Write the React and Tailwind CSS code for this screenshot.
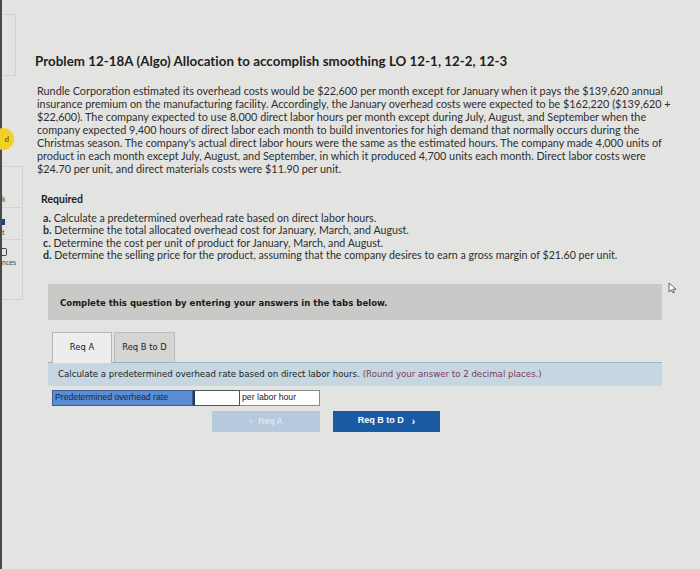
import React from "react";

export default function App() {
  const body = { fontFamily: "Lato, 'Open Sans', sans-serif" };
  const verdana = { fontFamily: "'DejaVu Sans', Verdana, sans-serif" };
  const arial = { fontFamily: "'Liberation Sans', Arial, sans-serif" };
  return (
    <div className="w-[700px] h-[569px] overflow-hidden flex bg-[#e3e4e2] text-[#2a2a2a]" style={body}>
      {/* sidebar */}
      <div className="w-[22px] shrink-0 border-l-2 border-[#4a4a4a] flex flex-col relative">
        <div className="mt-[14px] ml-[2px] w-[12px] h-[62px] border border-[#d0d0d0] border-l-0"></div>
        <div className="mt-[52px] -ml-[10px] w-[22px] h-[22px] rounded-full bg-[#f2d024] flex items-center justify-end pr-[5px] text-[8px] text-[#5a4a00]">d</div>
        <div className="mt-[16px] w-[21px] h-[134px] border border-[#d2d2d2] border-l-0 flex flex-col text-[7px] text-[#444]">
          <div className="h-[40px] flex items-end pb-[3px]">k</div>
          <div className="h-[32px] border-t border-[#d2d2d2] flex flex-col justify-end pb-[2px]">
            <div className="w-[3px] h-[6px] bg-[#1d3f8a] mb-[2px]"></div>
            <span>t</span>
          </div>
          <div className="h-[40px] border-t border-[#d2d2d2] flex flex-col justify-end pb-[12px]">
            <div className="w-[5px] h-[8px] border border-[#444] border-l-0 rounded-r-[2px] mb-[1px]"></div>
            <span>nces</span>
          </div>
        </div>
      </div>

      {/* main */}
      <div className="flex-1 pl-[13px] pt-[52px] relative">
        <h1 className="text-[13.3px] font-bold leading-[18px] text-[#1e1e1e] tracking-[0.05px] whitespace-nowrap">
          Problem 12-18A (Algo) Allocation to accomplish smoothing LO 12-1, 12-2, 12-3
        </h1>
        <p className="mt-[14px] ml-[2px] text-[10.83px] leading-[13px] text-[#2e2e2e] whitespace-nowrap">
          Rundle Corporation estimated its overhead costs would be $22,600 per month except for January when it pays the $139,620 annual<br />
          insurance premium on the manufacturing facility. Accordingly, the January overhead costs were expected to be $162,220 ($139,620 +<br />
          $22,600). The company expected to use 8,000 direct labor hours per month except during July, August, and September when the<br />
          company expected 9,400 hours of direct labor each month to build inventories for high demand that normally occurs during the<br />
          Christmas season. The company's actual direct labor hours were the same as the estimated hours. The company made 4,000 units of<br />
          product in each month except July, August, and September, in which it produced 4,700 units each month. Direct labor costs were<br />
          $24.70 per unit, and direct materials costs were $11.90 per unit.
        </p>
        <div className="mt-[17px] ml-[6px] text-[10.5px] font-bold text-[#222] leading-[14px]">Required</div>
        <div className="mt-[6px] ml-[8px] text-[10.66px] leading-[12.4px] text-[#2e2e2e] whitespace-nowrap">
          <div><b>a.</b> Calculate a predetermined overhead rate based on direct labor hours.</div>
          <div><b>b.</b> Determine the total allocated overhead cost for January, March, and August.</div>
          <div><b>c.</b> Determine the cost per unit of product for January, March, and August.</div>
          <div><b>d.</b> Determine the selling price for the product, assuming that the company desires to earn a gross margin of $21.60 per unit.</div>
        </div>

        {/* question panel */}
        <div className="mt-[22px] ml-[13px] w-[614px]">
          <div className="h-[36px] bg-[#c9cac8] flex items-center pl-[12px] pt-[4px] text-[8.55px] font-bold text-[#1a1a1a] whitespace-nowrap" style={verdana}>
            Complete this question by entering your answers in the tabs below.
          </div>
          <div className="mt-[11px] ml-[4px] flex items-end h-[31px]" style={verdana}>
            <div className="w-[60px] h-[31px] bg-[#ededec] border border-[#b5b5b5] border-b-0 flex items-center justify-center text-[8.4px] text-[#222] relative top-[1px]">Req A</div>
            <div className="ml-[2px] w-[61px] h-[30px] bg-[#d5d5d4] border border-[#bcbcbc] border-b-0 flex items-center justify-center text-[8.4px] text-[#222] whitespace-nowrap">Req B to D</div>
          </div>
          <div className="h-[24px] bg-[#c6d7e2] border-t border-[#9fb2c0] flex items-center pl-[10px] text-[8.6px] whitespace-nowrap" style={verdana}>
            <span className="text-[#1e1e1e]">Calculate a predetermined overhead rate based on direct labor hours.</span>
            <span className="ml-[3px] text-[#7b3a5c]">(Round your answer to 2 decimal places.)</span>
          </div>
          <div className="mt-[4px] ml-[4px] flex h-[16px] text-[8.7px] whitespace-nowrap" style={arial}>
            <div className="w-[141px] bg-[#5b8dd0] border border-[#3b5f96] flex items-center pl-[2px] text-[#14264a]">Predetermined overhead rate</div>
            <div className="w-[47px] bg-white border-y border-r border-[#555] border-l-2 border-l-[#2a3550]"></div>
            <div className="w-[80px] bg-white border border-[#8a8a8a] border-l-0 flex items-center pl-[2px] text-[#222]">per labor hour</div>
          </div>
          <div className="mt-[5px] flex gap-[13px] ml-[164px]" style={arial}>
            <div className="w-[108px] h-[21px] bg-[#b7c9dc] flex items-center justify-center text-[8.5px] font-bold text-[#dde6f0]">
              <span className="mr-[6px]">&lsaquo;</span>Req A
            </div>
            <div className="w-[107px] h-[21px] bg-[#1b5aa5] flex items-center justify-center text-[9px] font-bold text-white">
              Req B to D<span className="ml-[8px] text-[10px]">&rsaquo;</span>
            </div>
          </div>
        </div>

        {/* cursor */}
        <svg className="absolute left-[646px] top-[282px]" width="9" height="12" viewBox="0 0 9 12">
          <path d="M1 1 L1 10 L3.3 7.8 L5 11 L6.4 10.3 L4.8 7.2 L8 7.2 Z" fill="white" stroke="#444" strokeWidth="0.8" strokeLinejoin="round" />
        </svg>
      </div>
    </div>
  );
}
